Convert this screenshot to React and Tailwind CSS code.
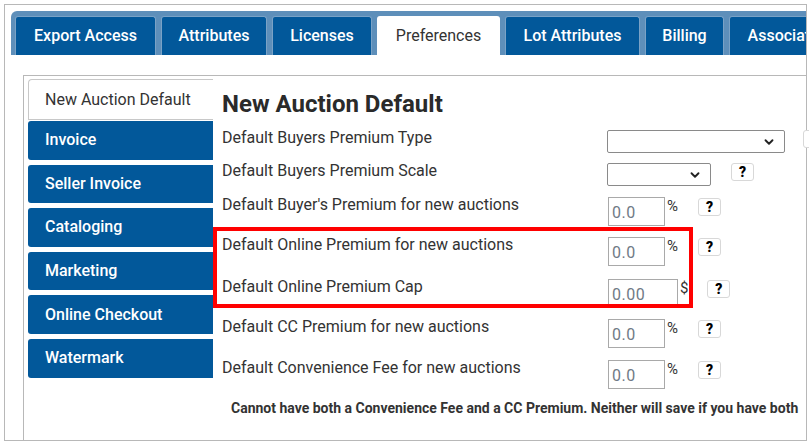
import React from 'react';
import { ChevronDown } from 'lucide-react';

const topTabs = [
  { label: 'Export Access', w: 'w-[141px]' },
  { label: 'Attributes', w: 'w-[106px]' },
  { label: 'Licenses', w: 'w-[100px]' },
  { label: 'Preferences', w: 'w-[123px]', active: true },
  { label: 'Lot Attributes', w: 'w-[135px]' },
  { label: 'Billing', w: 'w-[79px]' },
  { label: 'Associations', w: 'w-[130px]' },
];

const sideTabs = ['Invoice', 'Seller Invoice', 'Cataloging', 'Marketing', 'Online Checkout', 'Watermark'];

const HelpBtn = ({ className = '' }) => (
  <div
    className={`flex h-[18px] w-[23px] shrink-0 items-center justify-center rounded-[3px] border border-[#d8d8d8] bg-white text-[14px] font-black leading-none text-black ${className}`}
  >
    ?
  </div>
);

const FakeSelect = ({ w }) => (
  <div className={`flex h-[23px] ${w} shrink-0 items-center justify-end rounded-[2px] border border-[#8a8a8a] bg-white pr-[8px]`}>
    <ChevronDown size={14} strokeWidth={3.2} className="text-[#222]" />
  </div>
);

const NumInput = ({ w = 'w-[57px]', value = '0.0' }) => (
  <div className={`flex h-[29px] ${w} shrink-0 items-end border border-[#a9a9a9] bg-white pb-[3px] pl-[3px] text-[16px] leading-[18px] tracking-[0.5px] text-[#6f7a86]`}>
    {value}
  </div>
);

const Row = ({ h, label, children }) => (
  <div className={`flex ${h} items-start`}>
    <div className="w-[385px] shrink-0 whitespace-nowrap text-[16px] leading-4 text-[#333]">{label}</div>
    {children}
  </div>
);

const InputRow = ({ h, label, unit = '%', w, value, gap = 'ml-[20px]' }) => (
  <Row h={h} label={label}>
    <div className="ml-[1px]">
      <NumInput w={w} value={value} />
    </div>
    <span className="ml-[2px] mt-[1px] text-[15px] leading-4 text-[#333]">{unit}</span>
    <HelpBtn className={`${gap} mt-[1px]`} />
  </Row>
);

export default function App() {
  return (
    <div className="relative h-[447px] w-[809px] overflow-hidden bg-white pl-[4px] pt-[4px]" style={{ fontFamily: 'Roboto, "Liberation Sans", sans-serif' }}>
      <div className="flex h-[437px] w-[803px] flex-col border border-[#b8b8b8] pl-[6px] pt-[6px]">
        {/* top tabs */}
        <div className="flex h-[44px] shrink-0 gap-[5px] overflow-hidden rounded-tl-[6px] bg-[#5e8fba] pl-[4px] pt-[5px]">
          {topTabs.map((t) => (
            <div
              key={t.label}
              className={`flex h-[39px] ${t.w} shrink-0 items-center justify-center whitespace-nowrap rounded-t-[3px] text-[16px] ${
                t.active
                  ? 'bg-white text-[#333]'
                  : 'border border-b-0 border-[#7aa2c6] bg-[#02589a] font-medium text-white'
              }`}
            >
              {t.label}
            </div>
          ))}
        </div>

        {/* panel */}
        <div className="ml-[12px] mt-[20px] flex flex-1 border-l border-t border-[#b8b8b8] pl-[4px] pt-[3px]">
          <div className="flex w-[185px] shrink-0 flex-col">
            <div className="mb-[1px] flex h-[41px] items-center rounded-tl-[4px] border border-r-0 border-[#c8c8c8] bg-white pl-[16px] text-[16px] text-[#333]">
              New Auction Default
            </div>
            {sideTabs.map((s) => (
              <div
                key={s}
                className="mb-[5px] flex h-[38.6px] items-center rounded-l-[3px] bg-[#02589a] pl-[17px] text-[16px] font-medium text-white"
              >
                {s}
              </div>
            ))}
          </div>

          <div className="ml-[9px] flex flex-1 flex-col">
            <h1 className="mb-[12px] mt-[11px] text-[24px] font-bold leading-[28px] text-[#2a2a2a]">New Auction Default</h1>

            <Row h="h-[33px]" label="Default Buyers Premium Type">
              <FakeSelect w="w-[178px]" />
              <HelpBtn className="ml-[18px]" />
            </Row>
            <Row h="h-[34px]" label="Default Buyers Premium Scale">
              <FakeSelect w="w-[104px]" />
              <HelpBtn className="ml-[20px]" />
            </Row>
            <InputRow h="h-[40px]" label="Default Buyer's Premium for new auctions" />
            <InputRow h="h-[42px]" label="Default Online Premium for new auctions" />
            <InputRow h="h-[40px]" label="Default Online Premium Cap" unit="$" w="w-[70px]" value="0.00" gap="ml-[19px]" />
            <InputRow h="h-[41px]" label="Default CC Premium for new auctions" />
            <InputRow h="h-[40px]" label="Default Convenience Fee for new auctions" />

            <div className="ml-[9px] whitespace-nowrap text-[14px] font-bold leading-4 text-[#333]">
              Cannot have both a Convenience Fee and a CC Premium. Neither will save if you have both
            </div>
          </div>
        </div>
      </div>

      {/* annotation */}
      <div className="pointer-events-none absolute left-[213px] top-[227px] h-[81px] w-[480px] border-[4px] border-[#ff0000]" />
    </div>
  );
}
